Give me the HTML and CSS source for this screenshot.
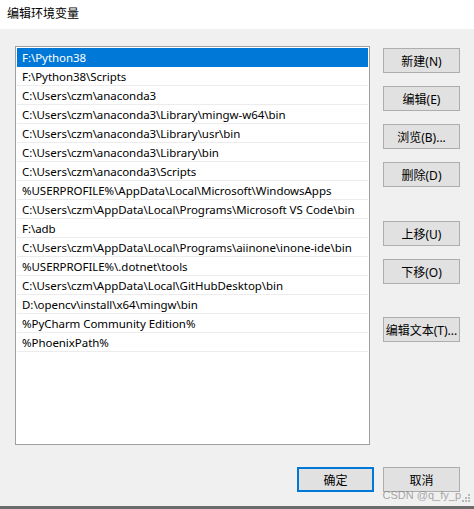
FILE: index.html
```html
<!DOCTYPE html>
<html lang="zh-CN">
<head>
    <meta charset="UTF-8">
    <title>编辑环境变量</title>
    <link rel="stylesheet" href="styles.css">
</head>
<body>
    <div class="window">
        <div class="titlebar">编辑环境变量</div>

        <div class="content">
            <ul class="path-list">
                <li class="selected">F:\Python38</li>
                <li>F:\Python38\Scripts</li>
                <li>C:\Users\czm\anaconda3</li>
                <li>C:\Users\czm\anaconda3\Library\mingw-w64\bin</li>
                <li>C:\Users\czm\anaconda3\Library\usr\bin</li>
                <li>C:\Users\czm\anaconda3\Library\bin</li>
                <li>C:\Users\czm\anaconda3\Scripts</li>
                <li>%USERPROFILE%\AppData\Local\Microsoft\WindowsApps</li>
                <li>C:\Users\czm\AppData\Local\Programs\Microsoft VS Code\bin</li>
                <li>F:\adb</li>
                <li>C:\Users\czm\AppData\Local\Programs\aiinone\inone-ide\bin</li>
                <li>%USERPROFILE%\.dotnet\tools</li>
                <li>C:\Users\czm\AppData\Local\GitHubDesktop\bin</li>
                <li>D:\opencv\install\x64\mingw\bin</li>
                <li>%PyCharm Community Edition%</li>
                <li>%PhoenixPath%</li>
            </ul>

            <div class="side-actions">
                <button class="btn">新建(N)</button>
                <button class="btn">编辑(E)</button>
                <button class="btn">浏览(B)...</button>
                <button class="btn">删除(D)</button>
                <button class="btn group-start">上移(U)</button>
                <button class="btn">下移(O)</button>
                <button class="btn group-start">编辑文本(T)...</button>
            </div>
        </div>

        <div class="footer">
            <button class="btn btn-default">确定</button>
            <button class="btn">取消</button>
            <span class="watermark">CSDN @q_fy_p</span>
            <span class="grip">
                <svg width="8" height="8" viewBox="0 0 8 8">
                    <rect x="6" y="0" width="2" height="2" fill="#b8b8b8"/>
                    <rect x="3" y="3" width="2" height="2" fill="#b8b8b8"/>
                    <rect x="6" y="3" width="2" height="2" fill="#b8b8b8"/>
                    <rect x="0" y="6" width="2" height="2" fill="#b8b8b8"/>
                    <rect x="3" y="6" width="2" height="2" fill="#b8b8b8"/>
                    <rect x="6" y="6" width="2" height="2" fill="#b8b8b8"/>
                </svg>
            </span>
        </div>

        <div class="taskbar-edge"></div>
    </div>
</body>
</html>
```

FILE: styles.css
```css
* {
    margin: 0;
    padding: 0;
    box-sizing: border-box;
}

body {
    font-family: "Noto Sans", "Noto Sans CJK SC", sans-serif;
    font-size: 12px;
    color: #000;
    background: #f0f0f0;
}

.window {
    width: 474px;
    height: 509px;
    display: flex;
    flex-direction: column;
    background: #f0f0f0;
}

.titlebar {
    height: 29px;
    background: #fff;
    padding-left: 7px;
    line-height: 28px;
    font-size: 12px;
}

.content {
    display: flex;
    padding: 17px 0 0 15px;
    gap: 13px;
}

.path-list {
    list-style: none;
    width: 355px;
    height: 399px;
    background: #fff;
    border: 1px solid #a0a0a0;
    padding: 1px;
}

.path-list li {
    height: 19px;
    line-height: 19px;
    padding-left: 5px;
    border-bottom: 1px solid #ececec;
    font-size: 11.5px;
    letter-spacing: -0.05px;
    white-space: nowrap;
    overflow: hidden;
}

.path-list li.selected {
    background: #0078d7;
    color: #fff;
    border-bottom-color: #0078d7;
}

.side-actions {
    display: flex;
    flex-direction: column;
    gap: 13px;
    padding-top: 2px;
}

.btn {
    width: 77px;
    height: 25px;
    background: #e1e1e1;
    border: 1px solid #adadad;
    font-family: inherit;
    font-size: 12px;
    color: #000;
}

.side-actions .group-start {
    margin-top: 21px;
}

.side-actions .group-start:last-child {
    margin-top: 20px;
}

.footer {
    position: relative;
    flex: 1;
    display: flex;
    justify-content: flex-end;
    align-items: flex-start;
    gap: 9px;
    padding: 22px 14px 0 0;
}

.btn-default {
    border: 2px solid #0078d7;
}

.watermark {
    position: absolute;
    right: 13px;
    bottom: 5px;
    font-family: "Liberation Sans", sans-serif;
    font-size: 11px;
    color: rgba(130, 130, 130, 0.7);
}

.grip {
    position: absolute;
    right: 4px;
    bottom: 4px;
    line-height: 0;
}

.taskbar-edge {
    height: 3px;
    background: #6b6b6b;
}
```
